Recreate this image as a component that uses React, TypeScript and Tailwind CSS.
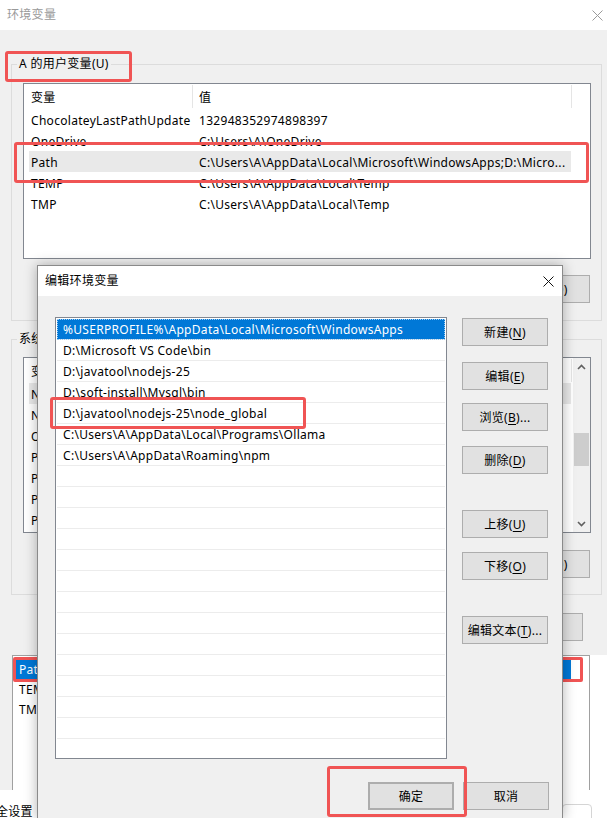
import type { ReactNode } from "react";

const userVars = [
  { name: "ChocolateyLastPathUpdate", value: "132948352974898397" },
  { name: "OneDrive", value: "C:\\Users\\A\\OneDrive" },
  { name: "Path", value: "C:\\Users\\A\\AppData\\Local\\Microsoft\\WindowsApps;D:\\Micro...", active: true },
  { name: "TEMP", value: "C:\\Users\\A\\AppData\\Local\\Temp" },
  { name: "TMP", value: "C:\\Users\\A\\AppData\\Local\\Temp" },
];

// only the first letters peek out from behind the dialog
const sysVars = [
  { name: "NUMBER_OF_PROCESSORS", value: "", active: true },
  { name: "NVM_HOME", value: "" },
  { name: "OS", value: "" },
  { name: "Path", value: "" },
  { name: "PATHEXT", value: "" },
  { name: "PROCESSOR_ARCHITECTURE", value: "" },
  { name: "PROCESSOR_IDENTIFIER", value: "" },
];

const paths = [
  "%USERPROFILE%\\AppData\\Local\\Microsoft\\WindowsApps",
  "D:\\Microsoft VS Code\\bin",
  "D:\\javatool\\nodejs-25",
  "D:\\soft-install\\Mysql\\bin",
  "D:\\javatool\\nodejs-25\\node_global",
  "C:\\Users\\A\\AppData\\Local\\Programs\\Ollama",
  "C:\\Users\\A\\AppData\\Roaming\\npm",
];

const Btn = ({ children, className = "" }: { children?: ReactNode; className?: string }) => (
  <div
    className={`flex h-[28px] w-[86px] shrink-0 items-center justify-center border border-[#adadad] bg-[#e1e1e1] pt-[1px] text-[12px] leading-[16px] text-black ${className}`}
  >
    {children}
  </div>
);

const Key = ({ k }: { k: string }) => <span className="underline underline-offset-2">{k}</span>;

const CloseX = ({ color }: { color: string }) => (
  <svg width="11" height="11" viewBox="0 0 11 11">
    <path d="M0.5 0.5 L10.5 10.5 M10.5 0.5 L0.5 10.5" stroke={color} strokeWidth="1" />
  </svg>
);

const Chevron = ({ up }: { up?: boolean }) => (
  <svg width="9" height="6" viewBox="0 0 9 6">
    <path d={up ? "M1 5 L4.5 1.5 L8 5" : "M1 1 L4.5 4.5 L8 1"} stroke="#606060" strokeWidth="1.6" fill="none" />
  </svg>
);

const ListHeader = () => (
  <div className="flex h-[25px] shrink-0">
    <div className="flex w-[168px] items-center pl-[7px] pt-[2px]">变量</div>
    <div className="my-[1px] w-[1px] bg-[#e5e5e5]" />
    <div className="flex w-[378px] items-center pl-[6px] pt-[2px]">值</div>
    <div className="my-[1px] w-[1px] bg-[#e5e5e5]" />
  </div>
);

const VarRow = ({ name, value, active }: { name: string; value: string; active?: boolean }) => (
  <div className={`ml-[5px] flex h-[21px] w-[542px] shrink-0 items-center pt-[2px] ${active ? "bg-[#e9e9e9]" : ""}`}>
    <div className="w-[163px] truncate pl-[2px]">{name}</div>
    <div className="flex-1 truncate whitespace-nowrap pl-[7px]">{value}</div>
  </div>
);

const GroupBox = ({ label, pt, mt, children }: { label: string; pt: string; mt: string; children: ReactNode }) => (
  <div className={`relative w-[591px] border border-[#dcdcdc] pl-[11px] pr-[10px] ${pt} ${mt}`}>
    <div className="absolute left-[5px] top-[-9px] bg-[#f0f0f0] px-[2px] leading-[16px]">{label}</div>
    {children}
  </div>
);

const GroupButtons = () => (
  <div className="flex justify-end gap-[10px] pr-[1px]">
    <Btn />
    <Btn />
    <Btn>删除(D)</Btn>
  </div>
);

export default function App() {
  return (
    <div className="relative h-[818px] w-[607px] overflow-hidden bg-white font-['Noto_Sans','Noto_Sans_CJK_SC',sans-serif] text-[12px] leading-[16px] tracking-[0.3px] text-black">
      {/* 环境变量 window */}
      <div className="absolute left-0 top-0 flex h-[654px] w-[607px] flex-col bg-[#f0f0f0]">
        <div className="flex h-[30px] shrink-0 items-center justify-between bg-white pl-[7px] pr-[4px] text-[#999999]">
          <span>环境变量</span>
          <CloseX color="#9a9a9a" />
        </div>
        <div className="flex flex-col pl-[11px]">
          <GroupBox label="A 的用户变量(U)" pt="pt-[18px] pb-[17px]" mt="mt-[34px]">
            <div className="flex h-[176px] w-[568px] flex-col overflow-hidden border border-[#828790] bg-white">
              <ListHeader />
              {userVars.map((v) => (
                <VarRow key={v.name} {...v} />
              ))}
            </div>
            <div className="mt-[16px]">
              <GroupButtons />
            </div>
          </GroupBox>
          <GroupBox label="系统变量(S)" pt="pt-[17px] pb-[16px]" mt="mt-[18px]">
            <div className="flex h-[176px] w-[568px] overflow-hidden border border-[#828790] bg-white">
              <div className="flex min-w-0 flex-1 flex-col overflow-hidden">
                <ListHeader />
                {sysVars.map((v) => (
                  <VarRow key={v.name} {...v} />
                ))}
              </div>
              <div className="flex w-[17px] shrink-0 flex-col bg-[#f0f0f0]">
                <div className="flex h-[17px] items-center justify-center">
                  <Chevron up />
                </div>
                <div className="flex-1 pt-[58px]">
                  <div className="mx-[1px] h-[33px] bg-[#cdcdcd]" />
                </div>
                <div className="flex h-[17px] items-center justify-center">
                  <Chevron />
                </div>
              </div>
            </div>
            <div className="mt-[17px]">
              <GroupButtons />
            </div>
          </GroupBox>
          <div className="mt-[18px] flex justify-end gap-[10px] pr-[24px]">
            <Btn />
            <Btn />
          </div>
        </div>
        <div className="absolute left-[5px] top-[51px] h-[31px] w-[127px] rounded-[3px] border-[3px] border-[#f05454]" />
        <div className="absolute left-[14px] top-[142px] h-[41px] w-[575px] rounded-[3px] border-[3px] border-[#f05454]" />
      </div>

      {/* window behind, lower part */}
      <div className="absolute left-0 top-[654px] flex h-[136px] w-[607px] bg-[#f0f0f0] pt-[1px]">
        <div className="ml-[12px] flex h-[140px] w-[578px] flex-col border border-[#a0a0a0] bg-white pt-[3px]">
          <div className="ml-[2px] flex h-[20px] w-[556px] items-center bg-[#0078d7] pl-[4px] pt-[1px] text-white">Path</div>
          <div className="flex h-[20px] items-center pl-[6px] pt-[1px]">TEMP</div>
          <div className="flex h-[20px] items-center pl-[6px] pt-[1px]">TMP</div>
        </div>
        <div className="flex-1 bg-white" />
        <div className="absolute left-[13px] top-[3px] h-[25px] w-[570px] rounded-[2px] border-[3px] border-[#f05454]" />
      </div>
      <div className="absolute left-0 top-[790px] flex h-[28px] w-[607px] bg-white pt-[14px]">
        <span className="ml-[-4px]">全设置</span>
        <div className="ml-auto mr-[15px] h-[20px] w-[30px] rounded-[4px] border border-[#d5d5d5]" />
      </div>

      {/* 编辑环境变量 dialog */}
      <div className="absolute left-[37px] top-[265px] flex h-[554px] w-[526px] flex-col border border-[#8a8a8a] bg-[#f0f0f0] shadow-[0_0_12px_rgba(0,0,0,0.3)]">
        <div className="flex h-[30px] shrink-0 items-center justify-between bg-white pl-[7px] pr-[8px]">
          <span>编辑环境变量</span>
          <CloseX color="#111111" />
        </div>
        <div className="flex pl-[17px] pt-[21px]">
          <div className="flex h-[442px] w-[392px] flex-col overflow-hidden border border-[#828790] bg-white p-[1px]">
            {Array.from({ length: 21 }).map((_, i) => {
              const text = paths[i];
              const sel = i === 0;
              return (
                <div
                  key={i}
                  className={`flex h-[21px] shrink-0 items-center border-b border-[#ececec] pl-[6px] pt-[2px] whitespace-nowrap ${
                    sel ? "bg-[#0078d7] text-white outline-1 outline-dotted outline-[#9ccbf2] -outline-offset-1" : ""
                  }`}
                >
                  {text ?? ""}
                </div>
              );
            })}
          </div>
          <div className="ml-[15px] flex flex-col pt-[1px]">
            <Btn>
              新建(<Key k="N" />)
            </Btn>
            <Btn className="mt-[16px]">
              编辑(<Key k="E" />)
            </Btn>
            <Btn className="mt-[13px]">
              浏览(<Key k="B" />)...
            </Btn>
            <Btn className="mt-[15px]">
              删除(<Key k="D" />)
            </Btn>
            <Btn className="mt-[36px]">
              上移(<Key k="U" />)
            </Btn>
            <Btn className="mt-[14px]">
              下移(<Key k="O" />)
            </Btn>
            <Btn className="mt-[36px]">
              编辑文本(<Key k="T" />)...
            </Btn>
          </div>
        </div>
        <div className="mt-[23px] flex justify-end gap-[9px] pr-[13px]">
          <Btn className="border-2 border-[#0078d7]">确定</Btn>
          <Btn>取消</Btn>
        </div>
        <div className="absolute left-[12px] top-[131px] h-[32px] w-[256px] rounded-[3px] border-[3px] border-[#f05454]" />
        <div className="absolute left-[289px] top-[500px] h-[51px] w-[140px] rounded-[3px] border-[3px] border-[#f05454]" />
      </div>
    </div>
  );
}
